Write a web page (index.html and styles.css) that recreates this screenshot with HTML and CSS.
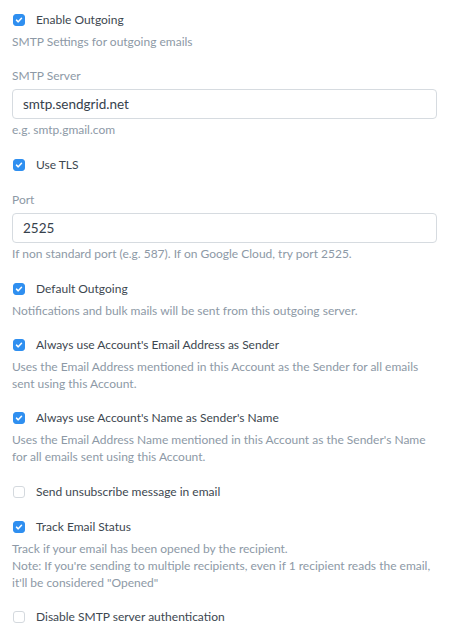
FILE: index.html
```html
<!DOCTYPE html>
<html>
<head>
<meta charset="utf-8">
<link rel="stylesheet" href="styles.css">
</head>
<body>
<div class="form">
  <div class="field">
    <label class="check-row"><span class="cb on"><svg viewBox="0 0 12 12"><polyline points="3,6.2 5.1,8.2 9,3.9"/></svg></span><span class="label-text">Enable Outgoing</span></label>
    <p class="desc">SMTP Settings for outgoing emails</p>
  </div>

  <div class="field">
    <div class="control-label">SMTP Server</div>
    <div class="input">smtp.sendgrid.net</div>
    <p class="help">e.g. smtp.gmail.com</p>
  </div>

  <div class="field">
    <label class="check-row"><span class="cb on"><svg viewBox="0 0 12 12"><polyline points="3,6.2 5.1,8.2 9,3.9"/></svg></span><span class="label-text">Use TLS</span></label>
  </div>

  <div class="field">
    <div class="control-label">Port</div>
    <div class="input">2525</div>
    <p class="help">If non standard port (e.g. 587). If on Google Cloud, try port 2525.</p>
  </div>

  <div class="field">
    <label class="check-row"><span class="cb on"><svg viewBox="0 0 12 12"><polyline points="3,6.2 5.1,8.2 9,3.9"/></svg></span><span class="label-text">Default Outgoing</span></label>
    <p class="desc">Notifications and bulk mails will be sent from this outgoing server.</p>
  </div>

  <div class="field">
    <label class="check-row"><span class="cb on"><svg viewBox="0 0 12 12"><polyline points="3,6.2 5.1,8.2 9,3.9"/></svg></span><span class="label-text">Always use Account's Email Address as Sender</span></label>
    <p class="desc">Uses the Email Address mentioned in this Account as the Sender for all emails sent using this Account.</p>
  </div>

  <div class="field">
    <label class="check-row"><span class="cb on"><svg viewBox="0 0 12 12"><polyline points="3,6.2 5.1,8.2 9,3.9"/></svg></span><span class="label-text">Always use Account's Name as Sender's Name</span></label>
    <p class="desc">Uses the Email Address Name mentioned in this Account as the Sender's Name for all emails sent using this Account.</p>
  </div>

  <div class="field">
    <label class="check-row"><span class="cb"></span><span class="label-text">Send unsubscribe message in email</span></label>
  </div>

  <div class="field">
    <label class="check-row"><span class="cb on"><svg viewBox="0 0 12 12"><polyline points="3,6.2 5.1,8.2 9,3.9"/></svg></span><span class="label-text">Track Email Status</span></label>
    <p class="desc">Track if your email has been opened by the recipient.<br>Note: If you're sending to multiple recipients, even if 1 recipient reads the email, it'll be considered "Opened"</p>
  </div>

  <div class="field">
    <label class="check-row"><span class="cb"></span><span class="label-text">Disable SMTP server authentication</span></label>
  </div>
</div>
</body>
</html>
```
FILE: styles.css
```css
html, body {
  margin: 0;
  padding: 0;
  background: #ffffff;
}

body {
  font-family: Lato, "Liberation Sans", sans-serif;
  font-size: 12px;
  color: #36414c;
}

.form {
  padding: 10.5px 34px 0 12px;
  display: flex;
  flex-direction: column;
  gap: 17.3px;
}

.field {
  display: flex;
  flex-direction: column;
}

.check-row {
  display: flex;
  align-items: center;
  height: 18px;
  gap: 11px;
  padding-left: 1px;
}

.cb {
  box-sizing: border-box;
  width: 12px;
  height: 12px;
  border-radius: 3px;
  border: 1px solid #d4d9de;
  background: #fff;
  display: flex;
  flex-shrink: 0;
}

.cb.on {
  background: #2f8ff0;
  border-color: #2f8ff0;
}

.cb svg {
  width: 10px;
  height: 10px;
  fill: none;
  stroke: #fff;
  stroke-width: 1.8;
  stroke-linecap: round;
  stroke-linejoin: round;
}

.label-text {
  font-size: 12px;
  color: #3d4750;
  line-height: 18px;
}

.desc, .help {
  margin: 0;
  color: #8d99a6;
  font-size: 12px;
  line-height: 17px;
}

.desc {
  margin-top: 4px;
}

.help {
  margin-top: 2.5px;
}

.control-label {
  color: #8d99a6;
  font-size: 12px;
  line-height: 17px;
  margin-bottom: 5px;
}

.input {
  box-sizing: border-box;
  height: 30px;
  border: 1px solid #d6dbe0;
  border-radius: 4px;
  padding: 0 10px;
  display: flex;
  align-items: center;
  font-size: 13.5px;
  color: #36414c;
}
```
